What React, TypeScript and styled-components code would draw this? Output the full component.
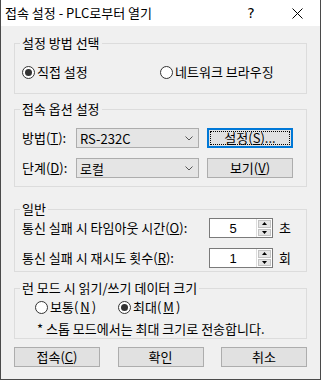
import styled, { createGlobalStyle, css } from 'styled-components';

const GlobalStyle = createGlobalStyle`
  html, body {
    margin: 0;
    padding: 0;
    background: #f0f0f0;
  }
  body {
    font-family: "Noto Sans CJK KR", "Noto Sans", sans-serif;
    font-size: 13px;
    color: #000;
  }
`;

const Window = styled.div`
  width: 321px;
  height: 380px;
  box-sizing: border-box;
  border: 1px solid #4a4a4a;
  border-top: none;
  background: #f0f0f0;
  display: flex;
  flex-direction: column;
`;

const TitleBar = styled.div`
  height: 26px;
  flex-shrink: 0;
  background: #fff;
  display: flex;
  align-items: center;
  padding-left: 4px;
`;

const Title = styled.div`
  flex: 1;
  font-size: 13px;
  line-height: 14px;
`;

const CaptionButton = styled.div`
  width: 46px;
  height: 26px;
  display: flex;
  align-items: center;
  justify-content: center;
  font-family: "DejaVu Sans", sans-serif;
  font-size: 14px;
  font-weight: normal;
`;

const Body = styled.div`
  padding: 10px 13px 0;
  display: flex;
  flex-direction: column;
`;

const Group = styled.fieldset<{ $top: number }>`
  margin: ${(p) => p.$top}px 0 0;
  padding: 0;
  border: 1px solid #dcdcdc;
  min-width: 0;
`;

const Legend = styled.legend`
  margin-left: 5px;
  padding: 0 2px;
  font-size: 13px;
  line-height: 14px;
`;

const Content = styled.div<{ $pad: string; $gap?: number }>`
  padding: ${(p) => p.$pad};
  display: flex;
  flex-direction: column;
  gap: ${(p) => p.$gap ?? 0}px;
`;

const Row = styled.div<{ $h?: number }>`
  display: flex;
  align-items: center;
  height: ${(p) => p.$h ?? 14}px;
`;

const Option = styled.label<{ $w?: number }>`
  display: flex;
  align-items: center;
  gap: 2px;
  width: ${(p) => (p.$w ? `${p.$w}px` : 'auto')};
  line-height: 14px;
`;

const RadioCircle = styled.span<{ $on?: boolean }>`
  width: 13px;
  height: 13px;
  box-sizing: border-box;
  border: 1px solid #333;
  border-radius: 50%;
  background: #fff;
  display: inline-flex;
  align-items: center;
  justify-content: center;
  flex-shrink: 0;
  &::after {
    content: '';
    width: 7px;
    height: 7px;
    border-radius: 50%;
    background: ${(p) => (p.$on ? '#333' : 'transparent')};
  }
`;

const FieldLabel = styled.span<{ $w: number }>`
  width: ${(p) => p.$w}px;
  flex-shrink: 0;
  line-height: 14px;
  white-space: nowrap;
`;

const Combo = styled.div`
  width: 123px;
  height: 20px;
  box-sizing: border-box;
  border: 1px solid #adadad;
  background: #e5e5e5;
  display: flex;
  align-items: center;
  justify-content: space-between;
  padding: 0 5px 0 3px;
  margin-right: 8px;
`;

const Button = styled.button<{ $default?: boolean }>`
  width: 86px;
  height: 20px;
  box-sizing: border-box;
  border: 1px solid #adadad;
  background: #e1e1e1;
  font: inherit;
  color: #000;
  padding: 0;
  line-height: 14px;
  position: relative;
  ${(p) =>
    p.$default &&
    css`
      border: 2px solid #0078d7;
      &::after {
        content: '';
        position: absolute;
        inset: 1px;
        border: 1px dotted #000;
      }
    `}
`;

const Spin = styled.div`
  display: flex;
  width: 64px;
  height: 20px;
  box-sizing: border-box;
  border: 1px solid #7a7a7a;
  background: #fff;
  flex-shrink: 0;
`;

const SpinValue = styled.div`
  flex: 1;
  display: flex;
  align-items: center;
  justify-content: center;
  font-family: "Liberation Sans", sans-serif;
  font-size: 13px;
`;

const SpinButtons = styled.div`
  width: 16px;
  display: flex;
  flex-direction: column;
  gap: 1px;
  padding: 1px;
  box-sizing: border-box;
  border-left: 1px solid #dcdcdc;
`;

const SpinHalf = styled.div`
  flex: 1;
  background: #e5e5e5;
  border: 1px solid #c2c2c2;
  display: flex;
  align-items: center;
  justify-content: center;
`;

const Unit = styled.span`
  margin-left: 6px;
  line-height: 14px;
`;

const Note = styled.div`
  padding-left: 2px;
  line-height: 14px;
`;

const ButtonBar = styled.div`
  display: flex;
  justify-content: space-between;
  margin-top: 8px;
`;

const Chevron = () => (
  <svg width="8" height="5" viewBox="0 0 8 5">
    <path d="M0.5 0.5 L4 4 L7.5 0.5" fill="none" stroke="#555" strokeWidth="1" />
  </svg>
);

const Arrow = ({ up }: { up?: boolean }) => (
  <svg width="5" height="3" viewBox="0 0 5 3">
    <path d={up ? 'M0 3 L2.5 0 L5 3 Z' : 'M0 0 L2.5 3 L5 0 Z'} fill="#000" />
  </svg>
);

const CloseIcon = () => (
  <svg width="11" height="11" viewBox="0 0 11 11">
    <path d="M0.5 0.5 L10.5 10.5 M10.5 0.5 L0.5 10.5" stroke="#000" strokeWidth="1" />
  </svg>
);

function SpinBox({ value }: { value: number }) {
  return (
    <Spin>
      <SpinValue>{value}</SpinValue>
      <SpinButtons>
        <SpinHalf>
          <Arrow up />
        </SpinHalf>
        <SpinHalf>
          <Arrow />
        </SpinHalf>
      </SpinButtons>
    </Spin>
  );
}

export default function App() {
  return (
    <>
      <GlobalStyle />
      <Window>
        <TitleBar>
          <Title>접속 설정 - PLC로부터 열기</Title>
          <CaptionButton>?</CaptionButton>
          <CaptionButton>
            <CloseIcon />
          </CaptionButton>
        </TitleBar>
        <Body>
          <Group $top={0}>
            <Legend>설정 방법 선택</Legend>
            <Content $pad="15px 0 14px 7px">
              <Row>
                <Option $w={138}>
                  <RadioCircle $on />
                  직접 설정
                </Option>
                <Option>
                  <RadioCircle />
                  네트워크 브라우징
                </Option>
              </Row>
            </Content>
          </Group>

          <Group $top={8}>
            <Legend>접속 옵션 설정</Legend>
            <Content $pad="12px 0 8px 7px" $gap={10}>
              <Row $h={20}>
                <FieldLabel $w={54}>
                  방법(<u>T</u>):
                </FieldLabel>
                <Combo>
                  <span>RS-232C</span>
                  <Chevron />
                </Combo>
                <Button $default>
                  설정(<u>S</u>)...
                </Button>
              </Row>
              <Row $h={20}>
                <FieldLabel $w={54}>
                  단계(<u>D</u>):
                </FieldLabel>
                <Combo>
                  <span>로컬</span>
                  <Chevron />
                </Combo>
                <Button>
                  보기(<u>V</u>)
                </Button>
              </Row>
            </Content>
          </Group>

          <Group $top={15}>
            <Legend>일반</Legend>
            <Content $pad="2px 0 3px 7px" $gap={10}>
              <Row $h={20}>
                <FieldLabel $w={187}>
                  통신 실패 시 타임아웃 시간(<u>O</u>):
                </FieldLabel>
                <SpinBox value={5} />
                <Unit>초</Unit>
              </Row>
              <Row $h={20}>
                <FieldLabel $w={187}>
                  통신 실패 시 재시도 횟수(<u>R</u>):
                </FieldLabel>
                <SpinBox value={1} />
                <Unit>회</Unit>
              </Row>
            </Content>
          </Group>

          <Group $top={9}>
            <Legend>런 모드 시 읽기/쓰기 데이터 크기</Legend>
            <Content $pad="5px 0 2px 20px" $gap={8}>
              <Row>
                <Option $w={83}>
                  <RadioCircle />
                  보통(<u>N</u>)
                </Option>
                <Option>
                  <RadioCircle $on />
                  최대(<u>M</u>)
                </Option>
              </Row>
              <Note>* 스톱 모드에서는 최대 크기로 전송합니다.</Note>
            </Content>
          </Group>

          <ButtonBar>
            <Button>
              접속(<u>C</u>)
            </Button>
            <Button>확인</Button>
            <Button>취소</Button>
          </ButtonBar>
        </Body>
      </Window>
    </>
  );
}
